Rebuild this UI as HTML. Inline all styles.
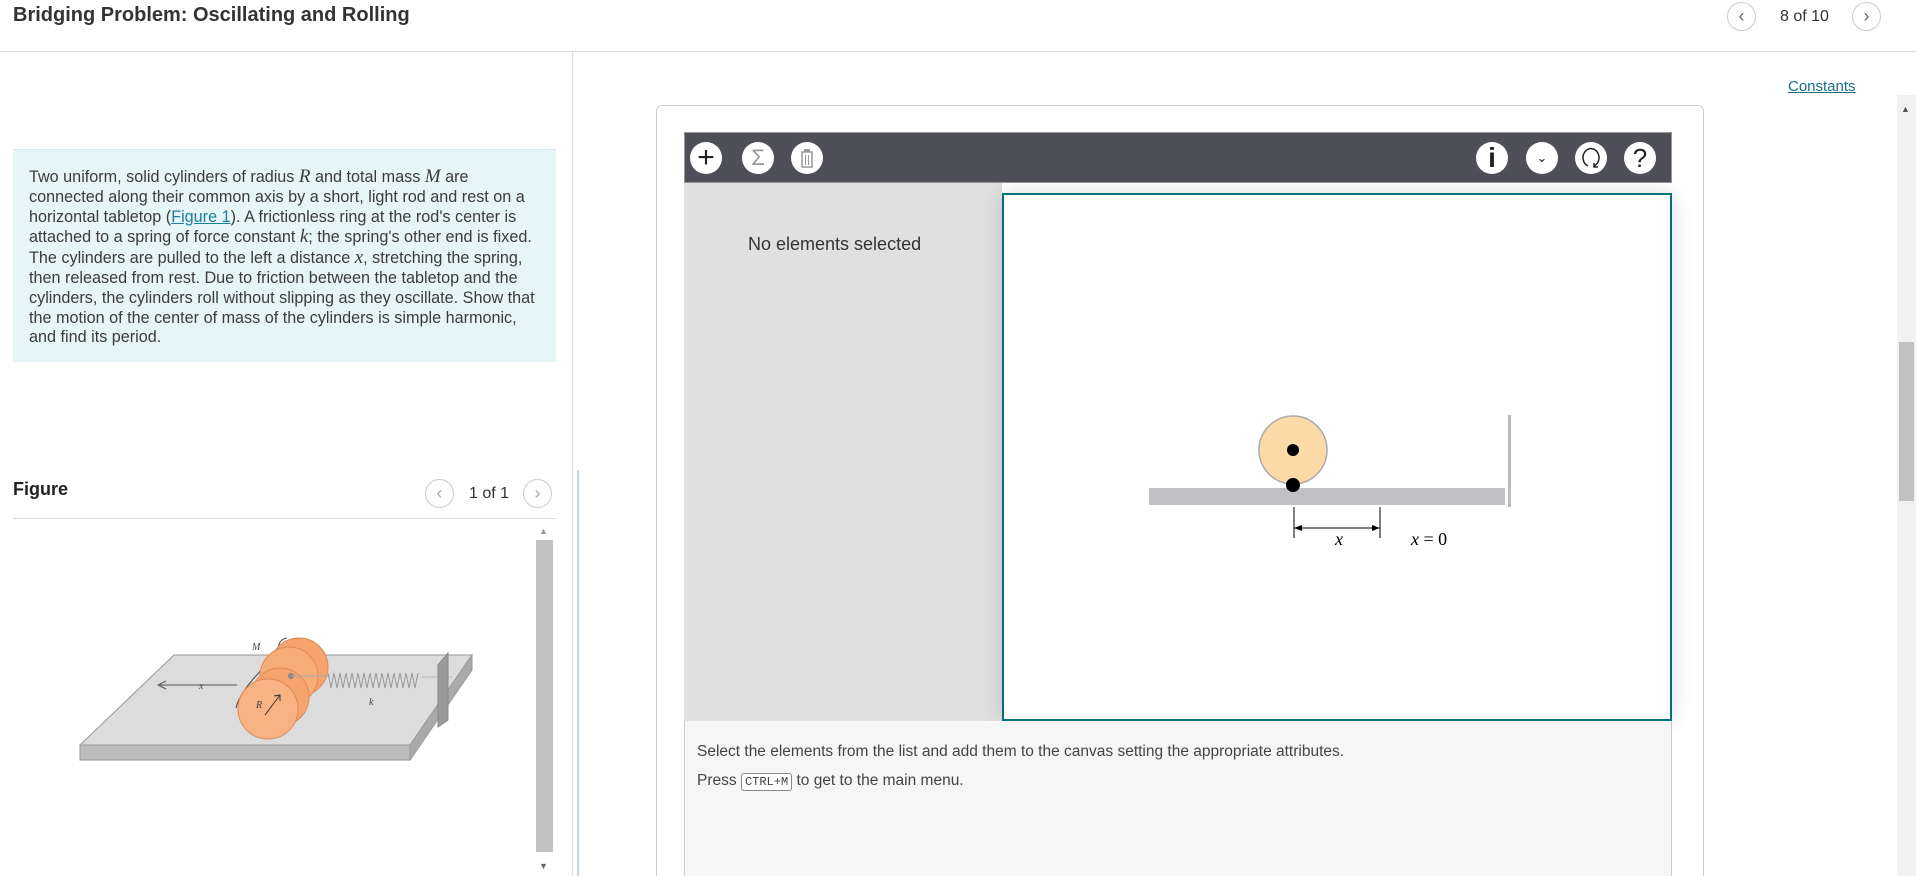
<!DOCTYPE html>
<html><head><meta charset="utf-8"><style>
*{margin:0;padding:0;box-sizing:border-box}
html,body{width:1916px;height:876px;overflow:hidden}
body{background:#fff;font-family:"Liberation Sans",sans-serif;color:#333;position:relative}
.abs{position:absolute}
.circ{position:absolute;border:1px solid #ccc;border-radius:50%;background:#fff;display:flex;align-items:center;justify-content:center;color:#666}
.tb{position:absolute;top:142px;width:32px;height:32px;border-radius:50%;background:#fff;display:flex;align-items:center;justify-content:center;color:#222}
i.m{font-family:'Liberation Serif',serif;font-size:19px;letter-spacing:0}
</style></head><body>
<div class="abs" style="left:13px;top:4px;font-size:20px;font-weight:bold;color:#333">Bridging Problem: Oscillating and Rolling</div>
<div class="circ" style="left:1727px;top:2px;width:29px;height:29px;font-size:18px">&#8249;</div>
<div class="abs" style="left:1780px;top:8px;font-size:16px;color:#333">8 of 10</div>
<div class="circ" style="left:1852px;top:2px;width:29px;height:29px;font-size:18px">&#8250;</div>
<div class="abs" style="left:0;top:51px;width:1916px;height:1px;background:#ddd"></div>
<div class="abs" style="left:572px;top:52px;width:1px;height:824px;background:#d8dde2"></div>

<div class="abs" style="left:13px;top:149px;width:543px;height:213px;background:#e6f5f6;border-top:1px solid #d6e8ea;padding:17px 0 0 16px;font-size:16.2px;letter-spacing:0;line-height:19.8px;color:#3c3c3c;white-space:nowrap">Two uniform, solid cylinders of radius <i class="m">R</i> and total mass <i class="m">M</i> are<br>connected along their common axis by a short, light rod and rest on a<br>horizontal tabletop (<span style="color:#1a7fa0;text-decoration:underline">Figure 1</span>). A frictionless ring at the rod's center is<br>attached to a spring of force constant <i class="m">k</i>; the spring's other end is fixed.<br>The cylinders are pulled to the left a distance <i class="m">x</i>, stretching the spring,<br>then released from rest. Due to friction between the tabletop and the<br>cylinders, the cylinders roll without slipping as they oscillate. Show that<br>the motion of the center of mass of the cylinders is simple harmonic,<br>and find its period.</div>

<div class="abs" style="left:13px;top:479px;font-size:18px;font-weight:bold;color:#222">Figure</div>
<div class="circ" style="left:425px;top:479px;width:29px;height:29px;font-size:18px;color:#aaa">&#8249;</div>
<div class="abs" style="left:469px;top:485px;font-size:16px;color:#333">1 of 1</div>
<div class="circ" style="left:523px;top:479px;width:29px;height:29px;font-size:18px;color:#aaa">&#8250;</div>
<div class="abs" style="left:13px;top:518px;width:543px;height:1px;background:#ddd"></div>
<div class="abs" style="left:536px;top:540px;width:17px;height:312px;background:#c1c1c1"></div>
<div class="abs" style="left:539px;top:526px;font-size:9px;color:#999">&#9650;</div>
<div class="abs" style="left:539px;top:861px;font-size:9px;color:#666">&#9660;</div>
<div class="abs" style="left:577px;top:470px;width:2px;height:406px;background:#c7d6e6"></div>

<svg class="abs" style="left:0;top:0" width="580" height="876">
<polygon points="174,655 472,655 410,745 80,745" fill="#dcdcdc" stroke="#999" stroke-width="1"/>
<polygon points="80,745 410,745 410,760 80,760" fill="#bdbdbd" stroke="#999"/>
<polygon points="410,745 472,655 472,670 410,760" fill="#aaa" stroke="#999"/>
<line x1="160" y1="685" x2="237" y2="685" stroke="#555" stroke-width="1"/>
<path d="M166,681 L158,685 L166,689" fill="none" stroke="#555"/>
<text x="199" y="689" font-family="Liberation Serif" font-style="italic" font-size="10" fill="#555">x</text>
<path d="M287,638 C275,640 282,650 270,660 C262,670 240,690 236,708" fill="none" stroke="#444"/>
<text x="252" y="650" font-family="Liberation Serif" font-style="italic" font-size="10" fill="#444">M</text>
<path d="M328,673 l3,15 l3,-15 l3,15 l3,-15 l3,15 l3,-15 l3,15 l3,-15 l3,15 l3,-15 l3,15 l3,-15 l3,15 l3,-15 l3,15 l3,-15 l3,15 l3,-15 l3,15 l3,-15 l3,15 l3,-15 l3,15 l3,-15 l3,15 l3,-15 l3,15 l3,-15 l3,15 l3,-15" fill="none" stroke="#999"/>
<line x1="422" y1="677" x2="452" y2="677" stroke="#bbb"/>
<text x="369" y="705" font-family="Liberation Serif" font-style="italic" font-size="10" fill="#444">k</text>
<polygon points="438,665 448,653 448,720 438,727" fill="#9a9a9a" stroke="#888"/>
<circle cx="299" cy="667" r="29" fill="#f6a46e" stroke="#e08a55"/>
<circle cx="289" cy="676" r="29" fill="#f7ad78" stroke="#e08a55"/>
<circle cx="280" cy="697" r="29" fill="#f6a46e" stroke="#e08a55"/>
<circle cx="268" cy="709" r="30" fill="#f8b283" stroke="#e08a55"/>
<circle cx="291" cy="676" r="3" fill="#888"/>
<line x1="291" y1="676" x2="330" y2="676" stroke="#aaa"/>
<text x="256" y="708" font-family="Liberation Serif" font-style="italic" font-size="10" fill="#444">R</text>
<line x1="265" y1="715" x2="280" y2="695" stroke="#333"/>
<path d="M274,696 L280,695 L280,701" fill="none" stroke="#333"/>
</svg>

<div class="abs" style="left:1788px;top:78px;font-size:15px;color:#1a6f86;text-decoration:underline">Constants</div>
<div class="abs" style="left:1897px;top:95px;width:19px;height:781px;background:#f1f1f1"></div>
<div class="abs" style="left:1899px;top:342px;width:15px;height:159px;background:#c1c1c1"></div>
<div class="abs" style="left:1901px;top:104px;font-size:9px;color:#555">&#9650;</div>

<div class="abs" style="left:656px;top:105px;width:1048px;height:800px;border:1px solid #ccc;border-radius:6px"></div>
<div class="abs" style="left:684px;top:132px;width:988px;height:51px;background:#4f4f58;border:1px solid #999"></div>
<div class="tb" style="left:690px;font-size:30px;font-weight:300">+</div>
<div class="tb" style="left:742px;font-size:22px;color:#999">&Sigma;</div>
<div class="tb" style="left:791px"><svg width="14" height="20"><rect x="2" y="4" width="10" height="15" fill="none" stroke="#999" stroke-width="1.5"/><rect x="4" y="1" width="6" height="3" fill="#999"/><line x1="5.5" y1="7" x2="5.5" y2="17" stroke="#999"/><line x1="8.5" y1="7" x2="8.5" y2="17" stroke="#999"/></svg></div>
<div class="tb" style="left:1476px;font-size:28px;font-weight:bold">i</div>
<div class="tb" style="left:1526px;font-size:13px">&#8964;</div>
<div class="tb" style="left:1575px"><svg width="22" height="24"><path d="M14,20 A8,9 0 1 0 8,20" fill="none" stroke="#222" stroke-width="1.5"/><path d="M14,17 L14,21 L18,21" fill="none" stroke="#222" stroke-width="1.5"/></svg></div>
<div class="tb" style="left:1624px;font-size:26px">?</div>

<div class="abs" style="left:684px;top:183px;width:318px;height:538px;background:#e0e0e0"></div>
<div class="abs" style="left:748px;top:234px;font-size:18px;color:#333">No elements selected</div>
<div class="abs" style="left:1002px;top:193px;width:670px;height:528px;border:2px solid #00727a;background:#fff;box-shadow:0 0 20px rgba(0,0,0,0.15)"></div>
<svg class="abs" style="left:1002px;top:193px" width="670" height="528">
<rect x="147" y="295" width="356" height="17" fill="#c1c0c5"/>
<rect x="506" y="222" width="3" height="92" fill="#bbb"/>
<circle cx="291" cy="257" r="34" fill="#fddba9" stroke="#aaa" stroke-width="1.5"/>
<circle cx="291" cy="257" r="6" fill="#000"/>
<circle cx="291" cy="292" r="7" fill="#000"/>
<line x1="292" y1="314" x2="292" y2="345" stroke="#000"/>
<line x1="378" y1="314" x2="378" y2="345" stroke="#000"/>
<line x1="292" y1="335" x2="378" y2="335" stroke="#000"/>
<path d="M292,335 l8,-3 v6z M378,335 l-8,-3 v6z" fill="#000"/>
<text x="333" y="352" font-family="Liberation Serif" font-style="italic" font-size="18" fill="#000">x</text>
<text x="409" y="352" font-family="Liberation Serif" font-size="18" fill="#000"><tspan font-style="italic">x</tspan> = 0</text>
</svg>

<div class="abs" style="left:684px;top:721px;width:988px;height:170px;background:#f6f6f6;border:1px solid #ccc;border-top:none"></div>
<div class="abs" style="left:697px;top:743px;font-size:15.5px;color:#444">Select the elements from the list and add them to the canvas setting the appropriate attributes.</div>
<div class="abs" style="left:697px;top:772px;font-size:15.5px;color:#444">Press <span style="display:inline-block;border:1px solid #888;border-radius:3px;padding:1px 3px;font-family:'Liberation Mono',monospace;font-size:12px;background:#fff">CTRL+M</span> to get to the main menu.</div>
</body></html>
